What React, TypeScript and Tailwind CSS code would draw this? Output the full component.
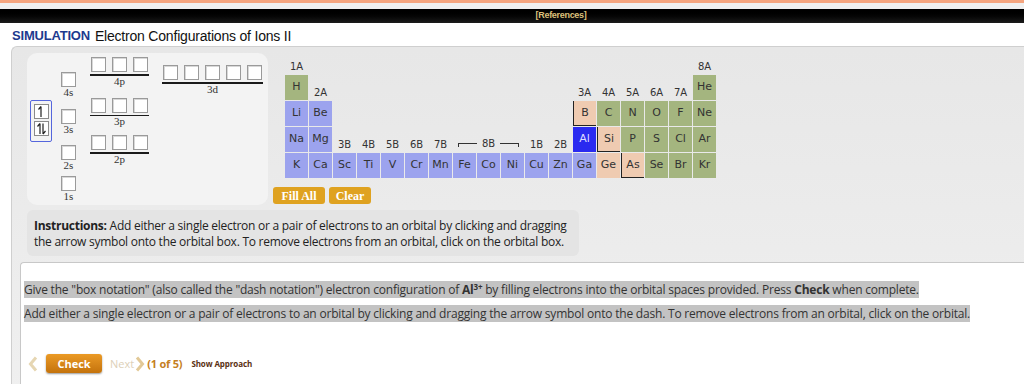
import React from "react";

const GREEN = new Set(["H", "He", "C", "N", "O", "F", "Ne", "P", "S", "Cl", "Ar", "Se", "Br", "Kr"]);
const PEACH = new Set(["B", "Si", "Ge", "As"]);
const EDGE = new Set(["B", "Si", "As"]);

const rows: string[][] = [
  ["L:1A", "", "", "", "", "", "", "", "", "", "", "", "", "", "", "", "", "L:8A"],
  ["H", "L:2A", "", "", "", "", "", "", "", "", "", "", "L:3A", "L:4A", "L:5A", "L:6A", "L:7A", "He"],
  ["Li", "Be", "", "", "", "", "", "", "", "", "", "", "B", "C", "N", "O", "F", "Ne"],
  ["Na", "Mg", "L:3B", "L:4B", "L:5B", "L:6B", "L:7B", "8B", "L:1B", "L:2B", "Al", "Si", "P", "S", "Cl", "Ar"],
  ["K", "Ca", "Sc", "Ti", "V", "Cr", "Mn", "Fe", "Co", "Ni", "Cu", "Zn", "Ga", "Ge", "As", "Se", "Br", "Kr"],
];

const Box = () => (
  <div className="w-[15px] h-[15px] bg-white border border-[#9a9a9a] shadow-[inset_1px_1px_0_#d8d8d8]" />
);

const Arrow = ({ pair }: { pair?: boolean }) => (
  <div className="w-[15px] h-[15px] bg-white border border-[#8a8a8a] flex items-center justify-center">
    <svg width="13" height="13" viewBox="0 0 13 13" fill="none" stroke="#222" strokeWidth="1.2">
      <path d={pair ? "M5 1.5V12 M5 1.5L2.5 4.5" : "M6 1.5V12 M6 1.5L3.5 4.5"} />
      {pair && <path d="M8 1.5V12 M8 12L10.5 9" />}
    </svg>
  </div>
);

const SOrbital = ({ label, className }: { label: string; className: string }) => (
  <div className={`flex flex-col items-center ${className}`}>
    <Box />
    <span className="font-['Liberation_Serif',serif] text-[11px] leading-[10px] text-[#333]">{label}</span>
  </div>
);

const Orbitals = ({ n, label, className }: { n: number; label: string; className: string }) => (
  <div className={`flex flex-col items-center ${className}`}>
    <div className="flex gap-[6px] px-[1px]">
      {Array.from({ length: n }).map((_, i) => (
        <Box key={i} />
      ))}
    </div>
    <div className="w-full h-[1.5px] bg-[#1a1a1a] mt-[2px]" />
    <span className="font-['Liberation_Serif',serif] text-[11px] leading-[11px] text-[#333]">{label}</span>
  </div>
);

const PeriodicTable = () => (
  <div className="ml-[12px] grid grid-cols-[repeat(18,23px)] grid-rows-[15px_repeat(4,25px)] gap-px font-['DejaVu_Sans',sans-serif]">
    {rows.flatMap((row, r) =>
      row.map((c, i) => {
        const key = `${r}-${i}`;
        if (c === "") return <div key={key} />;
        if (c === "8B")
          return (
            <div key={key} className="col-span-3 flex items-end pb-[3px] px-[5px] text-[10px] leading-[10px] text-[#333]">
              <div className="flex-1 h-[4px] border-l border-t border-[#333] mb-[2px]" />
              <span className="px-[5px]">8B</span>
              <div className="flex-1 h-[4px] border-r border-t border-[#333] mb-[2px]" />
            </div>
          );
        if (c.startsWith("L:"))
          return (
            <div key={key} className="flex items-end justify-center pb-[2px] text-[10px] leading-[10px] text-[#333]">
              {c.slice(2)}
            </div>
          );
        const bg =
          c === "Al"
            ? "bg-[#2a2af0] text-[#dcdcff]"
            : GREEN.has(c)
              ? "bg-[#a4b57f] text-[#333]"
              : PEACH.has(c)
                ? "bg-[#efcbb1] text-[#333]"
                : "bg-[#9ca3ee] text-[#333]";
        const edge = EDGE.has(c) ? "border-l border-b border-[#222]" : "";
        return (
          <div key={key} className={`flex items-center justify-center text-[11px] ${bg} ${edge}`}>
            {c}
          </div>
        );
      })
    )}
  </div>
);

const App = () => {
  return (
    <div className="w-[1024px] h-[384px] overflow-hidden bg-white font-['Liberation_Sans',sans-serif]">
      <div className="h-[3px] bg-[#f4a47e]" />
      <div className="h-[6px] bg-[#efefef]" />
      <div className="h-[14px] bg-gradient-to-b from-black to-[#1c1c1c] flex items-center justify-center">
        <span className="text-[9px] font-bold text-[#dcc07a] tracking-[-0.3px] ml-[98px]">[References]</span>
      </div>
      <div className="h-[23px] flex items-center pl-[12px] pt-[3px]">
        <span className="text-[13px] text-[#1d3a8e] font-bold tracking-[-0.2px]">SIMULATION</span>
        <span className="ml-[5px] text-[14px] text-[#111] tracking-[-0.2px]">Electron Configurations of Ions II</span>
      </div>

      <div className="ml-[11px] h-[400px] border-l border-t border-[#cfcfcf] rounded-tl-[6px] bg-gradient-to-b from-[#e7e7e7] to-[#f1f1f1] pt-[6px]">
        <div className="flex pl-[15px]">
          <div className="w-[241px] h-[152px] rounded-[10px] bg-[#f3f3f3] flex items-start pl-[3px]">
            <div className="mt-[47px] w-[22px] h-[42px] border-[1.5px] border-[#5566dd] rounded-[2px] flex flex-col items-center pt-[3px] gap-[2px]">
              <Arrow />
              <Arrow pair />
            </div>
            <div className="ml-[9px] flex flex-col">
              <SOrbital label="4s" className="mt-[19px]" />
              <SOrbital label="3s" className="mt-[12px]" />
              <SOrbital label="2s" className="mt-[11px]" />
              <SOrbital label="1s" className="mt-[6px]" />
            </div>
            <div className="ml-[14px] flex flex-col">
              <Orbitals n={3} label="4p" className="mt-[4px]" />
              <Orbitals n={3} label="3p" className="mt-[11px]" />
              <Orbitals n={3} label="2p" className="mt-[8px]" />
            </div>
            <Orbitals n={5} label="3d" className="ml-[13px] mt-[12px]" />
          </div>
          <div className="ml-[5px] pt-[6px]">
            <PeriodicTable />
            <div className="mt-[9px] flex gap-[4px] font-['Liberation_Serif',serif] font-bold text-[12px] text-white">
              <div className="w-[52px] h-[17px] rounded-[3px] bg-[#dfa220] flex items-center justify-center">Fill All</div>
              <div className="w-[42px] h-[17px] rounded-[3px] bg-[#dfa220] flex items-center justify-center">Clear</div>
            </div>
          </div>
        </div>

        <div className="ml-[15px] mt-[5px] w-[552px] h-[46px] rounded-[6px] bg-[#e4e4e4] pl-[7px] pr-[3px] pt-[8px] font-['Open_Sans',sans-serif] text-[12px] leading-[16px] text-[#222] tracking-[-0.26px] whitespace-nowrap">
          <p>
            <b>Instructions:</b> Add either a single electron or a pair of electrons to an orbital by clicking and dragging
          </p>
          <p>the arrow symbol onto the orbital box. To remove electrons from an orbital, click on the orbital box.</p>
        </div>

        <div className="ml-[8px] mt-[6px] h-[200px] bg-white border-l border-t border-[#c8c8c8] rounded-tl-[4px] pl-[3px] pt-[15px] font-['Open_Sans',sans-serif] text-[12px] leading-[24px] text-[#333] tracking-[-0.2px]">
          <p>
            <span className="bg-[#c3c3c3]">
              Give the "box notation" (also called the "dash notation") electron configuration of{" "}
              <b>
                Al<sup className="text-[8px]">3+</sup>
              </b>{" "}
              by filling electrons into the orbital spaces provided. Press <b>Check</b> when complete.
            </span>
          </p>
          <p>
            <span className="bg-[#c3c3c3]">
              Add either a single electron or a pair of electrons to an orbital by clicking and dragging the arrow symbol onto the dash. To remove electrons from an orbital, click on the orbital.
            </span>
          </p>
          <div className="mt-[28px] ml-[4px] flex items-center tracking-normal">
            <svg width="10" height="16" viewBox="0 0 10 16" fill="none" stroke="#e6d6b2" strokeWidth="3">
              <path d="M8 1.5L2.5 8L8 14.5" />
            </svg>
            <div className="ml-[8px] w-[56px] h-[19px] rounded-[3px] bg-gradient-to-b from-[#eb9a25] to-[#c4730c] shadow-[0_1px_2px_#999] flex items-center justify-center text-white font-bold text-[11px] leading-none">
              Check
            </div>
            <span className="ml-[8px] text-[11px] text-[#ddd0b8] leading-none">Next</span>
            <svg className="ml-[1px]" width="10" height="16" viewBox="0 0 10 16" fill="none" stroke="#e2c997" strokeWidth="3">
              <path d="M2 1.5L7.5 8L2 14.5" />
            </svg>
            <span className="ml-[2px] text-[11px] font-bold text-[#c57f22] leading-none tracking-[-0.2px]">(1 of 5)</span>
            <span className="ml-[9px] text-[8px] font-bold text-[#5a3012] leading-none tracking-[-0.1px]">Show Approach</span>
          </div>
        </div>
      </div>
    </div>
  );
};

export default App;
